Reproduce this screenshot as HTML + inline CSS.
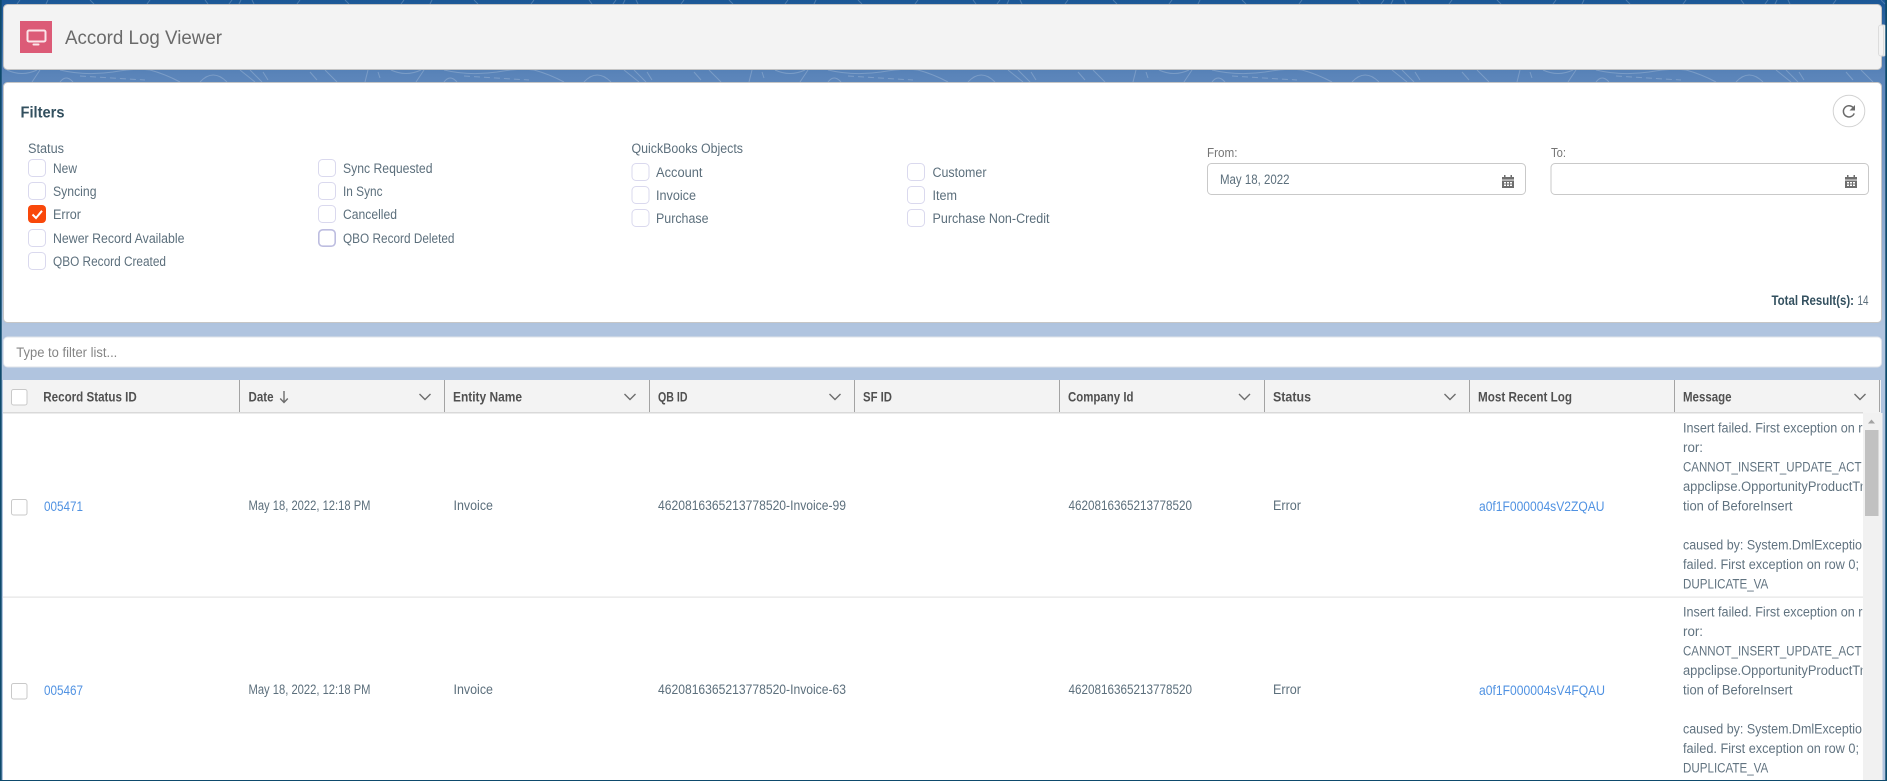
<!DOCTYPE html>
<html lang="en">
<head>
<meta charset="utf-8">
<title>Accord Log Viewer</title>
<style>
html,body{margin:0;padding:0;width:1887px;height:781px;overflow:hidden;background:#b0c4df}
svg{display:block}
text{font-family:"Liberation Sans",sans-serif}
.l{font-size:13.5px;fill:#5c6f7c}
.b{font-size:13.5px;fill:#5c6f7c}
.h{font-size:13.5px;fill:#505050;font-weight:bold}
.a{font-size:13.5px;fill:#5092e2}
.c{fill:#fff;stroke:#dad9ee;stroke-width:1}
.t{fill:#fff;stroke:#c9c9c9;stroke-width:1}
.ch{fill:none;stroke:#6d6d6d;stroke-width:1.4}
.d{stroke:#a3a3a3;stroke-width:1}
.m{font-size:13.5px;fill:#617380}
</style>
</head>
<body>
<svg xmlns="http://www.w3.org/2000/svg" width="1887" height="781" viewBox="0 0 1887 781">
<defs>
<linearGradient id="bg" x1="0" y1="0" x2="0" y2="1">
<stop offset="0" stop-color="#1b5796"/>
<stop offset="0.096" stop-color="#5a84b9"/>
<stop offset="0.42" stop-color="#b0c4df"/>
<stop offset="1" stop-color="#b0c4df"/>
</linearGradient>
<pattern id="topo" x="0" y="0" width="384" height="84" patternUnits="userSpaceOnUse">
<g fill="none" stroke="#fff" stroke-opacity=".2" stroke-width="1">
<path d="M7 70Q22 77 37 70M40 70L32 82M60 82Q66 74 73 82M60 70Q85 76 113 72Q135 68 150 70Q165 74 180 82M200 82Q213 68 227 82M240 70L255 82M250 70L262 82M263 72L268 80M310 72L317 80M325 70L337 82M365 82L368 70M378 72L380 78"/>
<path d="M80 76L145 80" stroke-dasharray="6 4"/>
<path d="M20 0L17 4M48 0L46 4M90 0L94 4M150 0L147 4M205 0L208 4M232 0L229 4M241 0L239 4M252 0L254 4M300 0L297 4M345 0L349 4"/>
</g>
</pattern>
<clipPath id="qb"><rect x="650" y="413" width="196" height="368"/></clipPath>
<clipPath id="msg"><rect x="1675" y="413" width="187.5" height="368"/></clipPath>
</defs>

<!-- page background -->
<rect width="1887" height="781" fill="url(#bg)"/>
<rect width="1887" height="84" fill="url(#topo)"/>

<!-- header card -->
<rect x="1878.5" y="25" width="8" height="31" rx="3" fill="#eef0f2" stroke="#dcdcdc"/>
<rect x="3.5" y="4.5" width="1878" height="65" rx="4" fill="#f3f3f3" stroke="#c4c4c4"/>
<rect x="1878.5" y="25" width="5" height="31" rx="2.5" fill="#f3f3f3" stroke="#dcdcdc"/>
<rect x="20" y="21" width="32" height="32" fill="#dc5b77"/>
<rect x="27.5" y="30.5" width="18" height="11" rx="1.5" fill="none" stroke="#fbe6ea" stroke-width="2"/>
<rect x="32.5" y="43.5" width="7" height="2" rx="1" fill="#fbe6ea"/>
<text x="65" y="44" font-size="19.5" fill="#6a6a6a" textLength="157" lengthAdjust="spacingAndGlyphs">Accord Log Viewer</text>

<!-- filter card -->
<rect x="3.5" y="82.5" width="1878" height="240" rx="4" fill="#fff" stroke="#c6c6c6"/>
<text x="20.5" y="117.5" font-size="15.5" font-weight="bold" fill="#33505f" textLength="44" lengthAdjust="spacingAndGlyphs">Filters</text>

<circle cx="1849" cy="111" r="15.8" fill="#fff" stroke="#d2d2d2"/>
<path d="M1853 107.4A5.6 5.6 0 1 0 1854.2 113.4" fill="none" stroke="#6b6b6b" stroke-width="1.5"/>
<path d="M1855 105V110.5H1849.5Z" fill="#6b6b6b"/>

<text class="l" x="28" y="153" textLength="36" lengthAdjust="spacingAndGlyphs">Status</text>
<rect class="c" x="28.5" y="159.5" width="17" height="17" rx="4"/>
<rect class="c" x="28.5" y="182.5" width="17" height="17" rx="4"/>
<rect x="28" y="205" width="18" height="18" rx="4" fill="#f9480a"/>
<path d="M32.5 214.5L36 218L42 210.8" fill="none" stroke="#fff" stroke-width="2"/>
<rect class="c" x="28.5" y="229.5" width="17" height="17" rx="4"/>
<rect class="c" x="28.5" y="252.5" width="17" height="17" rx="4"/>
<text class="l" x="53" y="173" textLength="24" lengthAdjust="spacingAndGlyphs">New</text>
<text class="l" x="53" y="196" textLength="43.5" lengthAdjust="spacingAndGlyphs">Syncing</text>
<text class="l" x="53" y="219" textLength="28" lengthAdjust="spacingAndGlyphs">Error</text>
<text class="l" x="53" y="243" textLength="131.5" lengthAdjust="spacingAndGlyphs">Newer Record Available</text>
<text class="l" x="53" y="266" textLength="113" lengthAdjust="spacingAndGlyphs">QBO Record Created</text>

<rect class="c" x="318.5" y="159.5" width="17" height="17" rx="4"/>
<rect class="c" x="318.5" y="182.5" width="17" height="17" rx="4"/>
<rect class="c" x="318.5" y="205.5" width="17" height="17" rx="4"/>
<rect x="318.8" y="229.8" width="16.4" height="16.4" rx="4" fill="#fff" stroke="#bdbde0" stroke-width="1.6"/>
<text class="l" x="343" y="173" textLength="89.5" lengthAdjust="spacingAndGlyphs">Sync Requested</text>
<text class="l" x="343" y="196" textLength="39.5" lengthAdjust="spacingAndGlyphs">In Sync</text>
<text class="l" x="343" y="219" textLength="54" lengthAdjust="spacingAndGlyphs">Cancelled</text>
<text class="l" x="343" y="243" textLength="111.5" lengthAdjust="spacingAndGlyphs">QBO Record Deleted</text>

<text class="l" x="631.5" y="153" textLength="111.5" lengthAdjust="spacingAndGlyphs">QuickBooks Objects</text>
<rect class="c" x="632" y="163.5" width="17" height="17" rx="4"/>
<rect class="c" x="632" y="186.5" width="17" height="17" rx="4"/>
<rect class="c" x="632" y="209.5" width="17" height="17" rx="4"/>
<text class="l" x="656" y="177" textLength="46.5" lengthAdjust="spacingAndGlyphs">Account</text>
<text class="l" x="656" y="200" textLength="40" lengthAdjust="spacingAndGlyphs">Invoice</text>
<text class="l" x="656" y="223" textLength="52.5" lengthAdjust="spacingAndGlyphs">Purchase</text>
<rect class="c" x="907.5" y="163.5" width="17" height="17" rx="4"/>
<rect class="c" x="907.5" y="186.5" width="17" height="17" rx="4"/>
<rect class="c" x="907.5" y="209.5" width="17" height="17" rx="4"/>
<text class="l" x="932.5" y="177" textLength="54" lengthAdjust="spacingAndGlyphs">Customer</text>
<text class="l" x="932.5" y="200" textLength="24.5" lengthAdjust="spacingAndGlyphs">Item</text>
<text class="l" x="932.5" y="223" textLength="117" lengthAdjust="spacingAndGlyphs">Purchase Non-Credit</text>

<text x="1207" y="157" font-size="12.5" fill="#757575" textLength="30.5" lengthAdjust="spacingAndGlyphs">From:</text>
<rect x="1207.5" y="163.5" width="318" height="31" rx="4" fill="#fff" stroke="#c9c9c9"/>
<text class="l" x="1220" y="184" textLength="69.5" lengthAdjust="spacingAndGlyphs">May 18, 2022</text>
<g fill="#6e6e6e">
<rect x="1502" y="177" width="12" height="2.6"/>
<rect x="1504" y="175" width="1.5" height="2.5"/>
<rect x="1510.5" y="175" width="1.5" height="2.5"/>
<path fill-rule="evenodd" d="M1502 180.5H1514V188H1502ZM1504 182V183.5H1506V182ZM1507 182V183.5H1509V182ZM1510 182V183.5H1512V182ZM1504 184.5V186H1506V184.5ZM1507 184.5V186H1509V184.5ZM1510 184.5V186H1512V184.5Z"/>
</g>
<text x="1551" y="157" font-size="12.5" fill="#757575" textLength="15" lengthAdjust="spacingAndGlyphs">To:</text>
<rect x="1551" y="163.5" width="317.5" height="31" rx="4" fill="#fff" stroke="#c9c9c9"/>
<g fill="#6e6e6e">
<rect x="1845" y="177" width="12" height="2.6"/>
<rect x="1847" y="175" width="1.5" height="2.5"/>
<rect x="1853.5" y="175" width="1.5" height="2.5"/>
<path fill-rule="evenodd" d="M1845 180.5H1857V188H1845ZM1847 182V183.5H1849V182ZM1850 182V183.5H1852V182ZM1853 182V183.5H1855V182ZM1847 184.5V186H1849V184.5ZM1850 184.5V186H1852V184.5ZM1853 184.5V186H1855V184.5Z"/>
</g>
<text x="1771.5" y="305" font-size="13.5" font-weight="bold" fill="#33505f" textLength="82.5" lengthAdjust="spacingAndGlyphs">Total Result(s):</text>
<text x="1857.5" y="305" font-size="13.5" fill="#5c6f7c" textLength="11" lengthAdjust="spacingAndGlyphs">14</text>

<!-- search -->
<rect x="3.5" y="337" width="1878" height="30" rx="4" fill="#fff" stroke="#dfe3ea"/>
<text x="16.3" y="357" font-size="13.5" fill="#858585" textLength="101" lengthAdjust="spacingAndGlyphs">Type to filter list...</text>

<!-- table header -->
<rect x="3" y="380" width="1878" height="33" fill="#f3f3f3"/>
<rect x="3" y="412" width="1860" height="1.5" fill="#d9d9d9"/>
<rect class="t" x="11.5" y="389.5" width="15.5" height="15.5" rx="2"/>
<g class="d">
<path class="d" d="M239.5 380V412M444.5 380V412M649.5 380V412M854.5 380V412M1059.5 380V412M1264.5 380V412M1469.5 380V412M1674.5 380V412M1879.5 380V412"/>
</g>
<text class="h" x="43.3" y="401.5" textLength="93.5" lengthAdjust="spacingAndGlyphs">Record Status ID</text>
<text class="h" x="248.5" y="401.5" textLength="25" lengthAdjust="spacingAndGlyphs">Date</text>
<path d="M284 391V402M280.2 398.5L284 402.5L287.8 398.5" fill="none" stroke="#6d6d6d" stroke-width="1.4"/>
<text class="h" x="453" y="401.5" textLength="69" lengthAdjust="spacingAndGlyphs">Entity Name</text>
<text class="h" x="658" y="401.5" textLength="29.5" lengthAdjust="spacingAndGlyphs">QB ID</text>
<text class="h" x="863" y="401.5" textLength="29" lengthAdjust="spacingAndGlyphs">SF ID</text>
<text class="h" x="1068" y="401.5" textLength="65.5" lengthAdjust="spacingAndGlyphs">Company Id</text>
<text class="h" x="1273" y="401.5" textLength="38" lengthAdjust="spacingAndGlyphs">Status</text>
<text class="h" x="1478" y="401.5" textLength="94" lengthAdjust="spacingAndGlyphs">Most Recent Log</text>
<text class="h" x="1683" y="401.5" textLength="48.5" lengthAdjust="spacingAndGlyphs">Message</text>
<path class="ch" d="M419.5 394L425 399.5L430.5 394M624.5 394L630 399.5L635.5 394M829.5 394L835 399.5L840.5 394M1239 394L1244.5 399.5L1250 394M1444.5 394L1450 399.5L1455.5 394M1854.5 394L1860 399.5L1865.5 394"/>

<!-- table body -->
<rect x="3" y="413.5" width="1860" height="367" fill="#fff"/>
<rect x="3" y="596.5" width="1860" height="1.2" fill="#e4e4e4"/>

<!-- row 1 -->
<rect class="t" x="11.5" y="499.5" width="15.5" height="15.5" rx="2"/>
<text class="a" x="44" y="511" textLength="39" lengthAdjust="spacingAndGlyphs">005471</text>
<text class="b" x="248.5" y="510" textLength="122" lengthAdjust="spacingAndGlyphs">May 18, 2022, 12:18 PM</text>
<text class="b" x="453.5" y="510" textLength="39.5" lengthAdjust="spacingAndGlyphs">Invoice</text>
<g clip-path="url(#qb)"><text class="b" x="658" y="510" textLength="188" lengthAdjust="spacingAndGlyphs">4620816365213778520-Invoice-99</text></g>
<text class="b" x="1068.5" y="510" textLength="123.5" lengthAdjust="spacingAndGlyphs">4620816365213778520</text>
<text class="b" x="1273" y="510" textLength="28" lengthAdjust="spacingAndGlyphs">Error</text>
<text class="a" x="1479" y="511" textLength="125.5" lengthAdjust="spacingAndGlyphs">a0f1F000004sV2ZQAU</text>
<g clip-path="url(#msg)">
<text class="m" x="1683" y="432.5" textLength="179.5" lengthAdjust="spacingAndGlyphs">Insert failed. First exception on r</text>
<text class="m" x="1683" y="452" textLength="20" lengthAdjust="spacingAndGlyphs">ror:</text>
<text class="m" x="1683" y="471.5" textLength="178.5" lengthAdjust="spacingAndGlyphs">CANNOT_INSERT_UPDATE_ACT</text>
<text class="m" x="1683" y="491" textLength="181" lengthAdjust="spacingAndGlyphs">appclipse.OpportunityProductTr</text>
<text class="m" x="1683" y="510.5" textLength="109.5" lengthAdjust="spacingAndGlyphs">tion of BeforeInsert</text>
<text class="m" x="1683" y="549.5" textLength="179" lengthAdjust="spacingAndGlyphs">caused by: System.DmlExceptio</text>
<text class="m" x="1683" y="569" textLength="176" lengthAdjust="spacingAndGlyphs">failed. First exception on row 0;</text>
<text class="m" x="1683" y="588.5" textLength="85.3" lengthAdjust="spacingAndGlyphs">DUPLICATE_VA</text>
</g>

<!-- row 2 -->
<rect class="t" x="11.5" y="683.5" width="15.5" height="15.5" rx="2"/>
<text class="a" x="44" y="695" textLength="39" lengthAdjust="spacingAndGlyphs">005467</text>
<text class="b" x="248.5" y="694" textLength="122" lengthAdjust="spacingAndGlyphs">May 18, 2022, 12:18 PM</text>
<text class="b" x="453.5" y="694" textLength="39.5" lengthAdjust="spacingAndGlyphs">Invoice</text>
<g clip-path="url(#qb)"><text class="b" x="658" y="694" textLength="188" lengthAdjust="spacingAndGlyphs">4620816365213778520-Invoice-63</text></g>
<text class="b" x="1068.5" y="694" textLength="123.5" lengthAdjust="spacingAndGlyphs">4620816365213778520</text>
<text class="b" x="1273" y="694" textLength="28" lengthAdjust="spacingAndGlyphs">Error</text>
<text class="a" x="1479" y="695" textLength="126" lengthAdjust="spacingAndGlyphs">a0f1F000004sV4FQAU</text>
<g clip-path="url(#msg)">
<text class="m" x="1683" y="616.5" textLength="179.5" lengthAdjust="spacingAndGlyphs">Insert failed. First exception on r</text>
<text class="m" x="1683" y="636" textLength="20" lengthAdjust="spacingAndGlyphs">ror:</text>
<text class="m" x="1683" y="655.5" textLength="178.5" lengthAdjust="spacingAndGlyphs">CANNOT_INSERT_UPDATE_ACT</text>
<text class="m" x="1683" y="675" textLength="181" lengthAdjust="spacingAndGlyphs">appclipse.OpportunityProductTr</text>
<text class="m" x="1683" y="694.5" textLength="109.5" lengthAdjust="spacingAndGlyphs">tion of BeforeInsert</text>
<text class="m" x="1683" y="733.5" textLength="179" lengthAdjust="spacingAndGlyphs">caused by: System.DmlExceptio</text>
<text class="m" x="1683" y="753" textLength="176" lengthAdjust="spacingAndGlyphs">failed. First exception on row 0;</text>
<text class="m" x="1683" y="772.5" textLength="85.3" lengthAdjust="spacingAndGlyphs">DUPLICATE_VA</text>
</g>

<!-- scrollbar -->
<rect x="1863" y="413" width="19.5" height="368" fill="#f1f1f1"/>
<path d="M1871.5 419.5L1875 423.5H1868Z" fill="#a3a3a3"/>
<rect x="1865" y="430" width="13.5" height="86" fill="#c1c1c1"/>

<!-- window border -->
<rect x="0" y="0" width="1.7" height="781" fill="#0e4a6c"/>
<rect x="1885.3" y="0" width="1.7" height="781" fill="#0e4a6c"/>
<rect x="0" y="780" width="1887" height="1" fill="#0e4a6c"/>
</svg>
</body>
</html>
